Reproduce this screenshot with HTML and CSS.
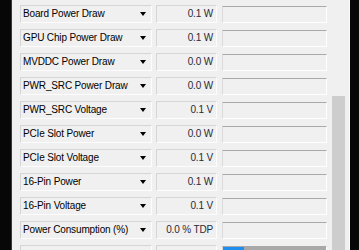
FILE: index.html
```html
<!DOCTYPE html>
<html>
<head>
<meta charset="utf-8">
<link rel="stylesheet" href="styles.css">
</head>
<body>
<div class="screen">
  <div class="space space-left"></div>
  <div class="panel">
    <div class="rows">
      <div class="row"><div class="combo"><span class="label">Board Power Draw</span><span class="arrow"></span></div><div class="value">0.1 W</div><div class="graph"></div></div>
      <div class="row"><div class="combo"><span class="label">GPU Chip Power Draw</span><span class="arrow"></span></div><div class="value">0.1 W</div><div class="graph"></div></div>
      <div class="row"><div class="combo"><span class="label">MVDDC Power Draw</span><span class="arrow"></span></div><div class="value">0.0 W</div><div class="graph"></div></div>
      <div class="row"><div class="combo"><span class="label">PWR_SRC Power Draw</span><span class="arrow"></span></div><div class="value">0.0 W</div><div class="graph"></div></div>
      <div class="row"><div class="combo"><span class="label">PWR_SRC Voltage</span><span class="arrow"></span></div><div class="value">0.1 V</div><div class="graph"></div></div>
      <div class="row"><div class="combo"><span class="label">PCIe Slot Power</span><span class="arrow"></span></div><div class="value">0.0 W</div><div class="graph"></div></div>
      <div class="row"><div class="combo"><span class="label">PCIe Slot Voltage</span><span class="arrow"></span></div><div class="value">0.1 V</div><div class="graph"></div></div>
      <div class="row"><div class="combo"><span class="label">16-Pin Power</span><span class="arrow"></span></div><div class="value">0.1 W</div><div class="graph"></div></div>
      <div class="row"><div class="combo"><span class="label">16-Pin Voltage</span><span class="arrow"></span></div><div class="value">0.1 V</div><div class="graph"></div></div>
      <div class="row"><div class="combo"><span class="label">Power Consumption (%)</span><span class="arrow"></span></div><div class="value">0.0 % TDP</div><div class="graph"></div></div>
      <div class="row"><div class="combo"></div><div class="value"></div><div class="graph graph-perfcap"><span class="perf-bar"></span></div></div>
    </div>
    <div class="scrollbar"><div class="thumb"></div></div>
  </div>
  <div class="space space-right"></div>
</div>
</body>
</html>
```

FILE: styles.css
```css
html, body {
  margin: 0;
  padding: 0;
  height: 250px;
  overflow: hidden;
  background: #060606;
}
.screen {
  display: flex;
  height: 250px;
  font-family: "Liberation Sans", Arial, sans-serif;
  font-size: 10px;
  letter-spacing: -0.15px;
  color: #000;
}
.space {
  background: #070707;
}
.space-left {
  width: 11px;
  border-right: 1px solid #3a3a3a;
}
.space-right {
  flex: 1;
}
.panel {
  width: 338px;
  background: #f0f0f0;
  display: flex;
}
.rows {
  width: 312px;
  padding: 5px 0 0 8px;
  display: flex;
  flex-direction: column;
  gap: 6px;
}
.row {
  display: flex;
  align-items: flex-start;
  height: 18px;
  flex: none;
}
.combo {
  box-sizing: border-box;
  width: 132px;
  height: 18px;
  border: 1px solid;
  border-color: #d6d6d6 #fdfdfd #fdfdfd #d6d6d6;
  background: #f0f0f0;
  display: flex;
  align-items: center;
  padding: 0 0 0 2px;
}
.label {
  flex: 1;
  white-space: nowrap;
  overflow: hidden;
  line-height: 16px;
}
.arrow {
  width: 0;
  height: 0;
  border-left: 3.5px solid transparent;
  border-right: 3.5px solid transparent;
  border-top: 4px solid #000;
  margin: 0 5px 0 4px;
}
.value {
  box-sizing: border-box;
  width: 61px;
  height: 18px;
  margin-left: 4px;
  border: 1px solid;
  border-color: #d6d6d6 #fdfdfd #fdfdfd #d6d6d6;
  text-align: right;
  padding-right: 3px;
  line-height: 16px;
  color: #2a2a35;
  white-space: nowrap;
}
.graph {
  box-sizing: border-box;
  width: 105px;
  height: 17px;
  margin: 1px 0 0 5px;
  border: 1px solid;
  border-color: #a9a9a9 #ffffff #ffffff #dadada;
  background: #f0f0f0;
  position: relative;
}
.graph-perfcap {
  background: #a8a8a8;
}
.perf-bar {
  position: absolute;
  left: 0;
  top: 0;
  width: 21px;
  height: 15px;
  background: #1e8ff0;
}
.scrollbar {
  width: 17px;
  background: #f0f0f0;
  border-right: 1px solid #fafafa;
  display: flex;
  flex-direction: column;
  padding-top: 96px;
}
.thumb {
  width: 13px;
  flex: 1;
  background: #cdcdcd;
}
```
